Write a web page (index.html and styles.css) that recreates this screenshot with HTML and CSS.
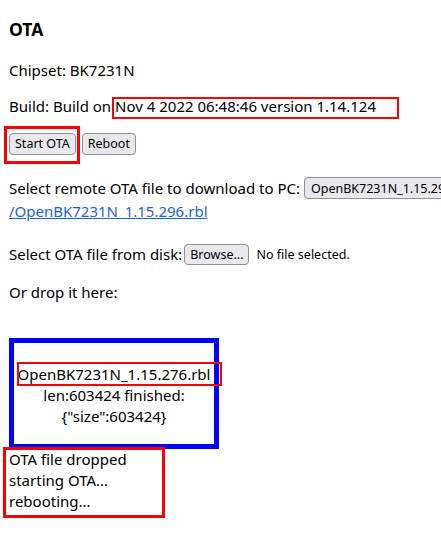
FILE: index.html
```html
<!DOCTYPE html>
<html lang="en">
<head>
<meta charset="utf-8">
<title>OTA</title>
<link rel="stylesheet" href="styles.css">
</head>
<body>
<h3 class="title">OTA</h3>
<p class="line chipset">Chipset: BK7231N</p>
<p class="line build">Build: Build on <span class="mark-build">Nov 4 2022 06:48:46 version 1.14.124</span></p>
<div class="btn-row">
  <span class="mark-btn"><button class="btn" type="button">Start OTA</button></span>
  <button class="btn btn-reboot" type="button">Reboot</button>
</div>
<div class="remote-row">
  <span>Select remote OTA file to download to PC:</span>
  <select class="sel"><option>OpenBK7231N_1.15.296.rbl</option></select>
</div>
<p class="line link-line"><a class="link" href="#">/OpenBK7231N_1.15.296.rbl</a></p>
<div class="disk-row">
  <span>Select OTA file from disk:</span>
  <button class="btn btn-browse" type="button">Browse...</button>
  <span class="nofile">No file selected.</span>
</div>
<p class="line drop-label">Or drop it here:</p>
<div class="dropzone">
  <span class="mark-file"></span>
  OpenBK7231N_1.15.276.rbl<br>
  len:603424 finished:<br>
  {"size":603424}
</div>
<div class="log">
  OTA file dropped<br>
  starting OTA...<br>
  rebooting...
</div>
</body>
</html>
```
FILE: styles.css
```css
html {
  overflow-x: hidden;
}
body {
  margin: 0;
  padding: 0 8px 20px 9px;
  font-family: "Noto Sans", "Open Sans", sans-serif;
  font-size: 15px;
  line-height: 21px;
  color: #000;
  background: #fff;
}
.title {
  font-size: 17.5px;
  line-height: 25px;
  font-weight: 700;
  margin: 17px 0 0;
}
.line {
  margin: 0;
}
.chipset { margin-top: 18px; }
.build { margin-top: 15px; }
.mark-build {
  position: relative;
}
.mark-build::after {
  content: "";
  position: absolute;
  left: -3px;
  right: -23px;
  top: 1px;
  height: 22px;
  border: 2px solid #f00;
  box-sizing: border-box;
}
.btn-row {
  display: flex;
  align-items: center;
  margin-top: 16px;
  height: 22px;
}
.btn {
  font-family: "Noto Sans", "Open Sans", sans-serif;
  font-size: 12.5px;
  line-height: 18px;
  color: #000;
  background: #e9e9ed;
  border: 1px solid #8f8f9d;
  border-radius: 4px;
  padding: 0 5px;
  height: 22px;
  box-sizing: border-box;
  margin: 0;
}
.mark-btn {
  position: relative;
  display: flex;
}
.mark-btn::after {
  content: "";
  position: absolute;
  left: -5px;
  top: -7px;
  width: 76px;
  height: 38px;
  border: 3px solid #f00;
  box-sizing: border-box;
}
.btn-reboot { margin-left: 6px; }
.remote-row {
  display: flex;
  align-items: center;
  white-space: nowrap;
  margin-top: 22px;
  height: 22px;
}
.sel {
  -webkit-appearance: none;
  appearance: none;
  flex-shrink: 0;
  margin-left: 4px;
  height: 22px;
  width: 200px;
  box-sizing: border-box;
  padding: 0 6px;
  font-family: "Noto Sans", "Open Sans", sans-serif;
  font-size: 12.5px;
  color: #000;
  background: #e9e9ed;
  border: 1px solid #8f8f9d;
  border-radius: 4px;
}
.link-line { margin-top: 2px; }
.link {
  color: #1e64d2;
  text-decoration: underline;
}
.disk-row {
  display: flex;
  align-items: center;
  white-space: nowrap;
  margin-top: 22px;
  height: 21px;
}
.btn-browse {
  height: 21px;
  margin-left: 2px;
  padding: 0 5px;
}
.nofile {
  font-size: 12.5px;
  margin-left: 7px;
}
.drop-label { margin-top: 17px; }
.dropzone {
  position: relative;
  margin-top: 35px;
  width: 210px;
  height: 111px;
  box-sizing: border-box;
  border: 5px solid #00f;
  padding-top: 21px;
  text-align: center;
}
.mark-file {
  position: absolute;
  left: 3px;
  top: 19px;
  width: 205px;
  height: 24px;
  border: 2px solid #f00;
  box-sizing: border-box;
}
.log {
  position: relative;
}
.log::after {
  content: "";
  position: absolute;
  left: -6px;
  top: -2px;
  width: 162px;
  height: 71px;
  border: 3px solid #f00;
  box-sizing: border-box;
}
```
